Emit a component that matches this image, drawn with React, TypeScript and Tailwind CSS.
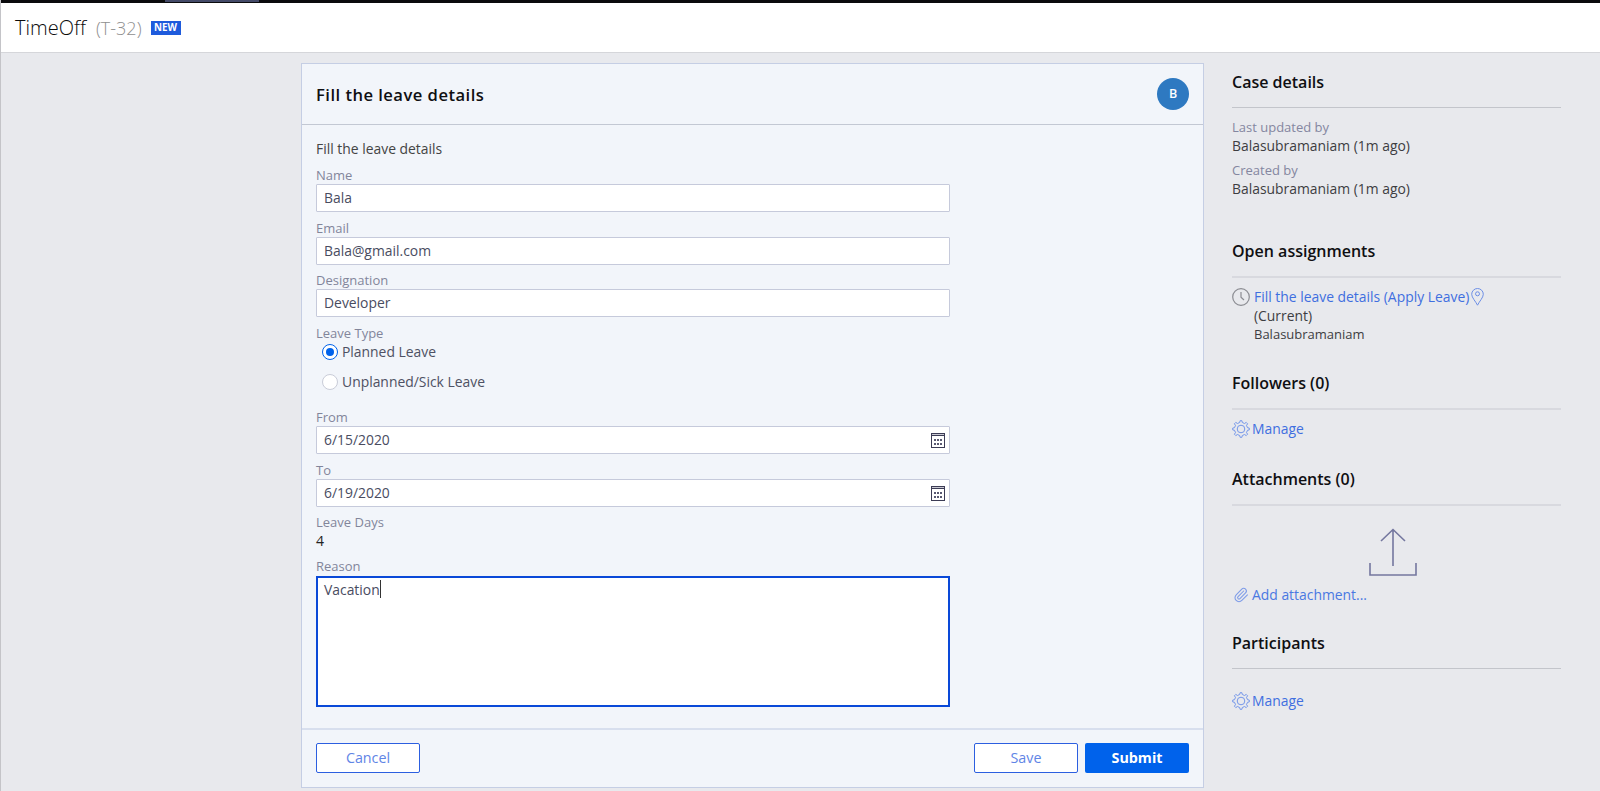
import type { ReactNode } from 'react';
import clsx from 'clsx';
import { Paperclip } from 'lucide-react';

function CalendarIcon() {
  return (
    <svg className="w-[14px] h-[15px] mr-1" viewBox="0 0 14 15" fill="none" shapeRendering="crispEdges">
      <path d="M0 0h14v15H0zM1 3v11h12V3z" fill="#3c3c55" fillRule="evenodd" />
      <path d="M1 1h12v1H1z" fill="#c9c9d2" />
      <path d="M3 6h2v2H3zM6 6h2v2H6zM9 6h2v2H9zM3 10h2v2H3zM6 10h2v2H6zM9 10h2v2H9z" fill="#5a5a72" />
    </svg>
  );
}

function ClockIcon() {
  return (
    <svg className="w-[18px] h-[18px] shrink-0" viewBox="0 0 18 18" fill="none" stroke="#8b8c92">
      <circle cx="9" cy="9" r="8.3" strokeWidth={1.2} />
      <path d="M9 4v5.2l3 2.8" strokeWidth={1.2} />
    </svg>
  );
}

function PinIcon() {
  return (
    <svg className="w-[13px] h-[18px] shrink-0" viewBox="0 0 13 18" fill="none" stroke="#6d8fe6">
      <path d="M6.5 17.2C4.8 13.6.7 9.6.7 6.3a5.8 5.8 0 0 1 11.6 0c0 3.3-4.1 7.3-5.8 10.9z" />
      <circle cx="6.5" cy="5.8" r="2" />
    </svg>
  );
}

function GearIcon() {
  return (
    <svg className="w-[18px] h-[18px] shrink-0" viewBox="0 0 18 18" fill="none" stroke="#7396ea" strokeLinejoin="round">
      <path d="M7.7 2.5 8.1.7h1.8l.4 1.8 2.3 1 1.6-1.1 1.4 1.4-1.1 1.6 1 2.3 1.8.4v1.8l-1.8.4-1 2.3 1.1 1.6-1.4 1.4-1.6-1.1-2.3 1-.4 1.8H8.1l-.4-1.8-2.3-1-1.6 1.1-1.4-1.4 1.1-1.6-1-2.3L.7 9.9V8.1l1.8-.4 1-2.3-1.1-1.6 1.4-1.4 1.6 1.1z" />
      <circle cx="9" cy="9" r="3.8" />
    </svg>
  );
}

function UploadIcon() {
  return (
    <svg className="w-12 h-12" viewBox="0 0 48 48" fill="none" stroke="#74779f" strokeWidth={1.6}>
      <path d="M24 1.5V38M12 13 24 1.5 36 13" />
      <path d="M1 35v12h46V35" />
    </svg>
  );
}

function Label({ children }: { children: ReactNode }) {
  return <div className="h-4 leading-[14px] text-[13px] text-[#82859a]">{children}</div>;
}

function Field({ label, value, date, className }: { label: string; value: string; date?: boolean; className?: string }) {
  return (
    <div className={className}>
      <Label>{label}</Label>
      <div className="flex h-7 items-center justify-between rounded-[1px] border border-[#c6cadb] bg-white pl-[7px] text-[13.9px] text-[#494c5f]">
        <span>{value}</span>
        {date && <CalendarIcon />}
      </div>
    </div>
  );
}

function Radio({ label, checked }: { label: string; checked?: boolean }) {
  return (
    <div className="flex h-[18px] items-center">
      <span
        className={clsx(
          'flex h-4 w-4 items-center justify-center rounded-full border bg-white',
          checked ? 'border-[#0062eb]' : 'border-[#c9ccd8]',
        )}
      >
        {checked && <span className="h-2 w-2 rounded-full bg-[#0062eb]" />}
      </span>
      <span className="ml-1 text-[13.9px] text-[#4e5163]">{label}</span>
    </div>
  );
}

function Heading({ children, soft, className }: { children: ReactNode; soft?: boolean; className?: string }) {
  return (
    <h2
      className={clsx(
        'pb-[14px] text-[16px] leading-[22px] font-semibold text-[#0f0f12]',
        soft ? 'border-b-2 border-[#d8d9df]' : 'border-b border-[#c3c5cb]',
        className,
      )}
    >
      {children}
    </h2>
  );
}

export default function App() {
  return (
    <div className="flex h-[791px] w-[1600px] flex-col overflow-hidden border-l border-[#c4c4c8] bg-[#e8e9ed] font-['Open_Sans',sans-serif]">
      <div className="h-[3px] bg-[#0b0b0d] pl-[164px]">
        <div className="h-[2px] w-[94px] bg-[#444a68]" />
      </div>

      <header className="flex h-[50px] items-center border-b border-[#d5d6da] bg-white pt-[1px] pl-[14px]">
        <h1 className="text-[20px] font-light text-[#0c0c0c]">TimeOff</h1>
        <span className="ml-[10px] pt-[1px] text-[18px] font-light text-[#8f8f8f]">(T-32)</span>
        <span className="ml-[9px] flex h-[14px] w-[30px] items-center justify-center bg-[#1e5bdc] text-[9.8px] font-bold text-white">
          NEW
        </span>
      </header>

      <div className="flex flex-1 items-start">
        <main className="mt-[10px] ml-[300px] flex h-[725px] w-[903px] flex-col border border-[#c5cee4] bg-[#f2f5fa]">
          <div className="flex h-[61px] items-center justify-between border-b border-[#c3c8d3] pr-[14px] pl-[14px]">
            <h2 className="mt-[2px] text-[16.6px] font-semibold tracking-[0.47px] text-[#0f0f12]">Fill the leave details</h2>
            <span className="flex h-8 w-8 items-center justify-center rounded-full bg-[#2e79c1] text-[12.5px] font-semibold text-white">
              B
            </span>
          </div>

          <div className="w-[648px] flex-1 pt-[15px] pl-[14px]">
            <p className="h-[18px] text-[13.9px] leading-[18px] text-[#444]">Fill the leave details</p>
            <Field className="mt-[10px]" label="Name" value="Bala" />
            <Field className="mt-[9px]" label="Email" value="Bala@gmail.com" />
            <Field className="mt-2" label="Designation" value="Developer" />

            <div className="mt-[9px]">
              <Label>Leave Type</Label>
              <div className="mt-[1px] flex flex-col gap-3 pl-[6px]">
                <Radio label="Planned Leave" checked />
                <Radio label="Unplanned/Sick Leave" />
              </div>
            </div>

            <Field className="mt-[19px]" label="From" value="6/15/2020" date />
            <Field className="mt-[9px]" label="To" value="6/19/2020" date />

            <div className="mt-2">
              <Label>Leave Days</Label>
              <div className="mt-[1px] h-[18px] text-[14px] leading-[18px] text-[#222]">4</div>
            </div>

            <div className="mt-[9px]">
              <Label>Reason</Label>
              <div className="mt-[1px] flex h-[131px] border-2 border-[#0a49d8] bg-white pt-[2px] pl-[6px] text-[13.9px] leading-[20px] text-[#494c5f]">
                <span>Vacation</span>
                <span className="h-[18px] w-px bg-[#333]" />
              </div>
            </div>
          </div>

          <footer className="flex h-[59px] items-center border-t-2 border-[#d8dfee] px-[14px] pb-[1px] text-[14.3px]">
            <button className="h-[30px] w-[104px] rounded-[2px] border border-[#2c5fe0] bg-white text-[#5f85e6]">Cancel</button>
            <button className="ml-auto h-[30px] w-[104px] rounded-[2px] border border-[#2c5fe0] bg-white text-[#5f85e6]">Save</button>
            <button className="ml-[7px] h-[30px] w-[104px] rounded-[2px] bg-[#0062eb] font-bold text-white">Submit</button>
          </footer>
        </main>

        <aside className="ml-7 w-[329px] pt-[18px] text-[13.9px] leading-[18px] text-[#3d3d42]">
          <Heading>Case details</Heading>
          <div className="mt-[11px] pb-[2px] text-[13px] leading-4 text-[#8486a0]">Last updated by</div>
          <div>Balasubramaniam (1m ago)</div>
          <div className="mt-[7px] pb-[2px] text-[13px] leading-4 text-[#8486a0]">Created by</div>
          <div>Balasubramaniam (1m ago)</div>

          <Heading soft className="mt-[42px]">Open assignments</Heading>
          <div className="mt-[10px] flex">
            <ClockIcon />
            <div className="ml-[4px]">
              <div className="flex">
                <a className="text-[#3f6fe0]">Fill the leave details (Apply Leave)</a>
                <span className="ml-[2px]">
                  <PinIcon />
                </span>
              </div>
              <div className="mt-[1px]">(Current)</div>
              <div className="text-[13px]">Balasubramaniam</div>
            </div>
          </div>

          <Heading soft className="mt-[29px]">Followers (0)</Heading>
          <div className="mt-[10px] flex text-[#3f6fe0]">
            <GearIcon />
            <a className="ml-[2px]">Manage</a>
          </div>

          <Heading soft className="mt-[30px]">Attachments (0)</Heading>
          <div className="mt-[22px] ml-[137px]">
            <UploadIcon />
          </div>
          <div className="mt-[10px] flex items-center text-[#4a78e2]">
            <Paperclip className="ml-[1px] h-4 w-4 text-[#7d9be8]" strokeWidth={1.6} />
            <a className="ml-[3px]">Add attachment...</a>
          </div>

          <Heading className="mt-[28px]">Participants</Heading>
          <div className="mt-[23px] flex text-[#3f6fe0]">
            <GearIcon />
            <a className="ml-[2px]">Manage</a>
          </div>
        </aside>
      </div>
    </div>
  );
}
